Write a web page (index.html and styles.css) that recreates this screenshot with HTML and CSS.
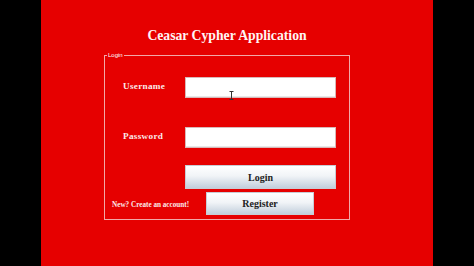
FILE: index.html
```html
<!DOCTYPE html>
<html>
<head>
<meta charset="utf-8">
<link rel="stylesheet" href="styles.css">
</head>
<body>
<div class="screen">
  <h1 class="title">Ceasar Cypher Application</h1>
  <div class="panel">
    <span class="legend">Login</span>
    <div class="field">
      <label class="label">Username</label>
      <div class="input">
        <svg class="cursor" width="5" height="9" viewBox="0 0 5 9"><path d="M0.5 0.5h4M2.5 0.5v8M0.5 8.5h4" stroke="#333" stroke-width="1" fill="none"/></svg>
      </div>
    </div>
    <div class="field field-pass">
      <label class="label">Password</label>
      <div class="input"></div>
    </div>
    <div class="field field-login">
      <span></span>
      <button class="btn btn-login">Login</button>
    </div>
    <div class="register-row">
      <span class="new">New? Create an account!</span>
      <button class="btn btn-register">Register</button>
    </div>
  </div>
</div>
</body>
</html>
```
FILE: styles.css
```css
html, body {
  margin: 0;
  padding: 0;
  background: #000;
}
body {
  width: 474px;
  height: 266px;
  display: flex;
  justify-content: center;
  overflow: hidden;
}
.screen {
  width: 392px;
  height: 266px;
  background: #e60000;
  display: flex;
  flex-direction: column;
  font-family: "Liberation Serif", serif;
}
.title {
  margin: 26px 0 0 63px;
  width: 246px;
  height: 20px;
  line-height: 20px;
  font-size: 13.7px;
  font-weight: bold;
  color: #fff4f4;
  text-align: center;
}
.panel {
  position: relative;
  margin: 9px 0 0 63px;
  width: 244px;
  border: 1px solid #f2a8a8;
  padding-top: 21px;
  box-sizing: content-box;
  height: 142px;
  display: flex;
  flex-direction: column;
}
.legend {
  position: absolute;
  top: -4px;
  left: 2px;
  background: #e60000;
  color: #fff;
  font-family: "Liberation Sans", sans-serif;
  font-size: 6px;
  line-height: 7px;
  padding: 0 1px;
}
.field {
  display: grid;
  grid-template-columns: 62px 151px;
  padding-left: 18px;
  align-items: center;
  height: 21px;
}
.field-pass { margin-top: 29px; }
.field-login { margin-top: 17px; height: 24px; }
.label {
  color: #fbeaea;
  font-weight: bold;
  font-size: 9.2px;
  letter-spacing: 0.3px;
  position: relative;
  top: -2px;
}
.input {
  position: relative;
  height: 21px;
  background: #fff;
  box-sizing: border-box;
  border: 1px solid #d9b8b8;
  box-shadow: inset 0 -1px 0 #e8e8e8;
}
.cursor {
  position: absolute;
  left: 43px;
  top: 13px;
}
.btn {
  display: block;
  margin: 0;
  padding: 0;
  font-family: "Liberation Serif", serif;
  font-weight: bold;
  font-size: 10px;
  color: #222;
  border: 1px solid #c9ccd4;
  background: linear-gradient(#ffffff 0%, #f1f4f7 45%, #c2cfdc 100%);
  box-sizing: border-box;
}
.btn-login {
  width: 151px;
  height: 24px;
}
.register-row {
  display: flex;
  align-items: center;
  margin-top: 3px;
  padding-left: 7px;
  height: 23px;
}
.new {
  width: 94px;
  color: #fbeaea;
  font-weight: bold;
  font-size: 7.2px;
  position: relative;
  top: 1px;
}
.btn-register {
  width: 108px;
  height: 23px;
}
```
